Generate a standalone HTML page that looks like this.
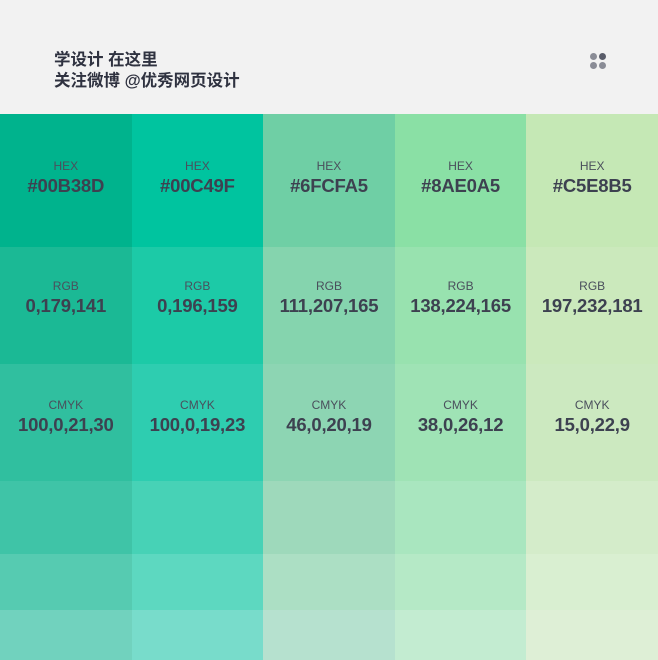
<!DOCTYPE html>
<html><head><meta charset="utf-8"><style>
*{margin:0;padding:0;box-sizing:border-box}
body{width:658px;height:658px;background:#f2f2f2;font-family:"Liberation Sans","Noto Sans CJK SC",sans-serif;color:#3d4150;position:relative;overflow:hidden}
.h{position:absolute;left:54px;top:50px;font-size:16.5px;font-weight:bold;line-height:21px;color:#2f3240}
.dots{position:absolute;left:590px;top:53px;width:16px;height:16px}
.dots i{position:absolute;width:7px;height:7px;border-radius:50%;background:#8a8c96}
.grid{position:absolute;left:0;top:114px;width:658px}
.row{display:flex}
.c{width:131.6px;text-align:center;position:relative}
.l{position:absolute;left:0;right:0;font-size:12px;color:#4a4f5c}
.v{position:absolute;left:0;right:0;font-size:18.5px;font-weight:bold;letter-spacing:-0.2px}
</style></head><body>
<div class="h">学设计 在这里<br>关注微博 @优秀网页设计</div>
<div class="dots"><i style="left:0;top:0"></i><i style="left:9px;top:0;background:#5a5d6a"></i><i style="left:0;top:9px"></i><i style="left:9px;top:9px"></i></div>
<div class="grid">
<div class="row" style="height:133px">
<div class="c" style="background:#00b38d"><div class="l" style="top:45px">HEX</div><div class="v" style="top:61px">#00B38D</div></div>
<div class="c" style="background:#00c49f"><div class="l" style="top:45px">HEX</div><div class="v" style="top:61px">#00C49F</div></div>
<div class="c" style="background:#6fcfa5"><div class="l" style="top:45px">HEX</div><div class="v" style="top:61px">#6FCFA5</div></div>
<div class="c" style="background:#8ae0a5"><div class="l" style="top:45px">HEX</div><div class="v" style="top:61px">#8AE0A5</div></div>
<div class="c" style="background:#c5e8b5"><div class="l" style="top:45px">HEX</div><div class="v" style="top:61px">#C5E8B5</div></div>
</div>
<div class="row" style="height:117px">
<div class="c" style="background:#1bb995"><div class="l" style="top:32px">RGB</div><div class="v" style="top:48px">0,179,141</div></div>
<div class="c" style="background:#1ccaa7"><div class="l" style="top:32px">RGB</div><div class="v" style="top:48px">0,196,159</div></div>
<div class="c" style="background:#85d4ae"><div class="l" style="top:32px">RGB</div><div class="v" style="top:48px">111,207,165</div></div>
<div class="c" style="background:#98e2af"><div class="l" style="top:32px">RGB</div><div class="v" style="top:48px">138,224,165</div></div>
<div class="c" style="background:#cbe9bc"><div class="l" style="top:32px">RGB</div><div class="v" style="top:48px">197,232,181</div></div>
</div>
<div class="row" style="height:117px">
<div class="c" style="background:#30bf9f"><div class="l" style="top:34px">CMYK</div><div class="v" style="top:50px">100,0,21,30</div></div>
<div class="c" style="background:#2ecdb0"><div class="l" style="top:34px">CMYK</div><div class="v" style="top:50px">100,0,19,23</div></div>
<div class="c" style="background:#8dd5b3"><div class="l" style="top:34px">CMYK</div><div class="v" style="top:50px">46,0,20,19</div></div>
<div class="c" style="background:#9fe3b5"><div class="l" style="top:34px">CMYK</div><div class="v" style="top:50px">38,0,26,12</div></div>
<div class="c" style="background:#cce9c0"><div class="l" style="top:34px">CMYK</div><div class="v" style="top:50px">15,0,22,9</div></div>
</div>
<div class="row" style="height:73px">
<div class="c" style="background:#3fc4a7"></div><div class="c" style="background:#47d2b6"></div><div class="c" style="background:#9ed9bb"></div><div class="c" style="background:#a9e6bf"></div><div class="c" style="background:#d4ecca"></div>
</div>
<div class="row" style="height:56px">
<div class="c" style="background:#56cbb1"></div><div class="c" style="background:#5dd8c0"></div><div class="c" style="background:#acdfc4"></div><div class="c" style="background:#b5e9c6"></div><div class="c" style="background:#d9efd1"></div>
</div>
<div class="row" style="height:50px">
<div class="c" style="background:#71d2be"></div><div class="c" style="background:#78dccb"></div><div class="c" style="background:#b6e1cf"></div><div class="c" style="background:#c3ecd1"></div><div class="c" style="background:#deefd6"></div>
</div>
</div>
</body></html>
